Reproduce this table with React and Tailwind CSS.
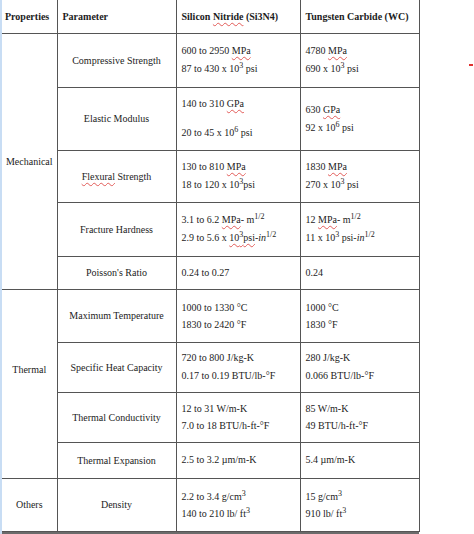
import React from "react";

const W = ({ children }) => (
  <span className="underline decoration-wavy decoration-[#e25b58] decoration-1 underline-offset-[2px]">
    {children}
  </span>
);

const Sup = ({ children }) => <sup className="text-[8px]">{children}</sup>;

const rows = [
  {
    group: "Mechanical",
    span: 5,
    name: "Compressive Strength",
    h: "h-[54px]",
    si: [<>600 to 2950 <W>MPa</W></>, <>87 to 430 x 10<Sup>3</Sup> psi</>],
    wc: [<>4780 <W>MPa</W></>, <>690 x 10<Sup>3</Sup> psi</>],
  },
  {
    name: "Elastic Modulus",
    h: "h-[63px]",
    gap: true,
    si: [<>140 to 310 <W>GPa</W></>, <>20 to 45 x 10<Sup>6</Sup> psi</>],
    wc: [<>630 <W>GPa</W></>, <>92 x 10<Sup>6</Sup> psi</>],
  },
  {
    name: <W>Flexural</W>,
    nameRest: " Strength",
    h: "h-[52px]",
    si: [<>130 to 810 <W>MPa</W></>, <>18 to 120 x 10<Sup>3</Sup>psi</>],
    wc: [<>1830 <W>MPa</W></>, <>270 x 10<Sup>3</Sup> psi</>],
  },
  {
    name: "Fracture Hardness",
    h: "h-[54px]",
    si: [
      <>3.1 to 6.2 <W>MPa</W>- m<Sup>1/2</Sup></>,
      <>2.9 to 5.6 x <W>10<Sup>3</Sup>psi</W>-<i>in</i><Sup>1/2</Sup></>,
    ],
    wc: [
      <>12 <W>MPa</W>- m<Sup>1/2</Sup></>,
      <>11 x 10<Sup>3</Sup> psi-<i>in</i><Sup>1/2</Sup></>,
    ],
  },
  {
    name: "Poisson's Ratio",
    h: "h-[33px]",
    si: ["0.24 to 0.27"],
    wc: ["0.24"],
  },
  {
    group: "Thermal",
    groupCls: "pb-[28px]",
    span: 4,
    name: "Maximum Temperature",
    h: "h-[53px]",
    lh: "leading-[17px]",
    si: ["1000 to 1330 °C", "1830 to 2420 °F"],
    wc: ["1000 °C", "1830 °F"],
  },
  {
    name: "Specific Heat Capacity",
    h: "h-[50px]",
    si: ["720 to 800 J/kg-K", "0.17 to 0.19 BTU/lb-°F"],
    wc: ["280 J/kg-K", "0.066 BTU/lb-°F"],
  },
  {
    name: "Thermal Conductivity",
    h: "h-[50px]",
    lh: "leading-[17px]",
    si: ["12 to 31 W/m-K", "7.0 to 18 BTU/h-ft-°F"],
    wc: ["85 W/m-K", "49 BTU/h-ft-°F"],
  },
  {
    name: "Thermal Expansion",
    h: "h-[36px]",
    si: ["2.5 to 3.2 µm/m-K"],
    wc: ["5.4 µm/m-K"],
  },
  {
    group: "Others",
    span: 1,
    name: "Density",
    h: "h-[53px]",
    lh: "leading-[17px]",
    si: [<>2.2 to 3.4 g/cm<Sup>3</Sup></>, <>140 to 210 lb/ ft<Sup>3</Sup></>],
    wc: [<>15 g/cm<Sup>3</Sup></>, <>910 lb/ ft<Sup>3</Sup></>],
  },
];

const Lines = ({ items, gap, lh }) => (
  <div className="flex flex-col">
    {items.map((t, i) => (
      <div key={i} className={`${lh || "leading-[18px]"} ${gap && i > 0 ? "mt-[11px]" : ""}`}>
        {t}
      </div>
    ))}
  </div>
);

export default function App() {
  const cell = "border border-[#555] px-[5px] align-middle";
  return (
    <div className="w-[474px] h-[534px] bg-white flex text-[#1c1c1c] text-[10px] font-['Liberation_Serif',serif] overflow-hidden">
      <div className="flex flex-col w-[419px] border-l-2 border-[#c8ddf4]">
        <table className="table-fixed border-collapse w-[417px]">
          <colgroup>
            <col className="w-[55px]" />
            <col className="w-[119px]" />
            <col className="w-[124px]" />
            <col className="w-[119px]" />
          </colgroup>
          <thead>
            <tr className="h-[33px] font-bold">
              <th className="border-b border-r border-[#555] px-[3px] text-left">Properties</th>
              <th className="border-b border-r border-[#555] px-[5px] text-left">Parameter</th>
              <th className="border-b border-r border-[#555] px-[5px] text-left">
                Silicon <W>Nitride</W> (Si3N4)
              </th>
              <th className="border-b border-r border-[#555] px-[5px] text-left">Tungsten Carbide (WC)</th>
            </tr>
          </thead>
          <tbody>
            {rows.map((r, i) => (
              <tr key={i} className={r.h}>
                {r.group && (
                  <td
                    rowSpan={r.span}
                    className={`border-b border-r border-[#555] text-center align-middle ${r.groupCls || ""}`}
                  >
                    {r.group}
                  </td>
                )}
                <td className={`${cell} text-center`}>
                  {r.name}
                  {r.nameRest}
                </td>
                <td className={cell}>
                  <Lines items={r.si} gap={r.gap} lh={r.lh} />
                </td>
                <td className={cell}>
                  <Lines items={r.wc} lh={r.lh} />
                </td>
              </tr>
            ))}
          </tbody>
        </table>
        <div className="h-[2px] bg-[#6b6b6b]" />
      </div>
      <div className="flex-1 pt-[64px] pl-[50px]">
        <div className="w-[4px] h-[2px] bg-[#e0302f]" />
      </div>
    </div>
  );
}
